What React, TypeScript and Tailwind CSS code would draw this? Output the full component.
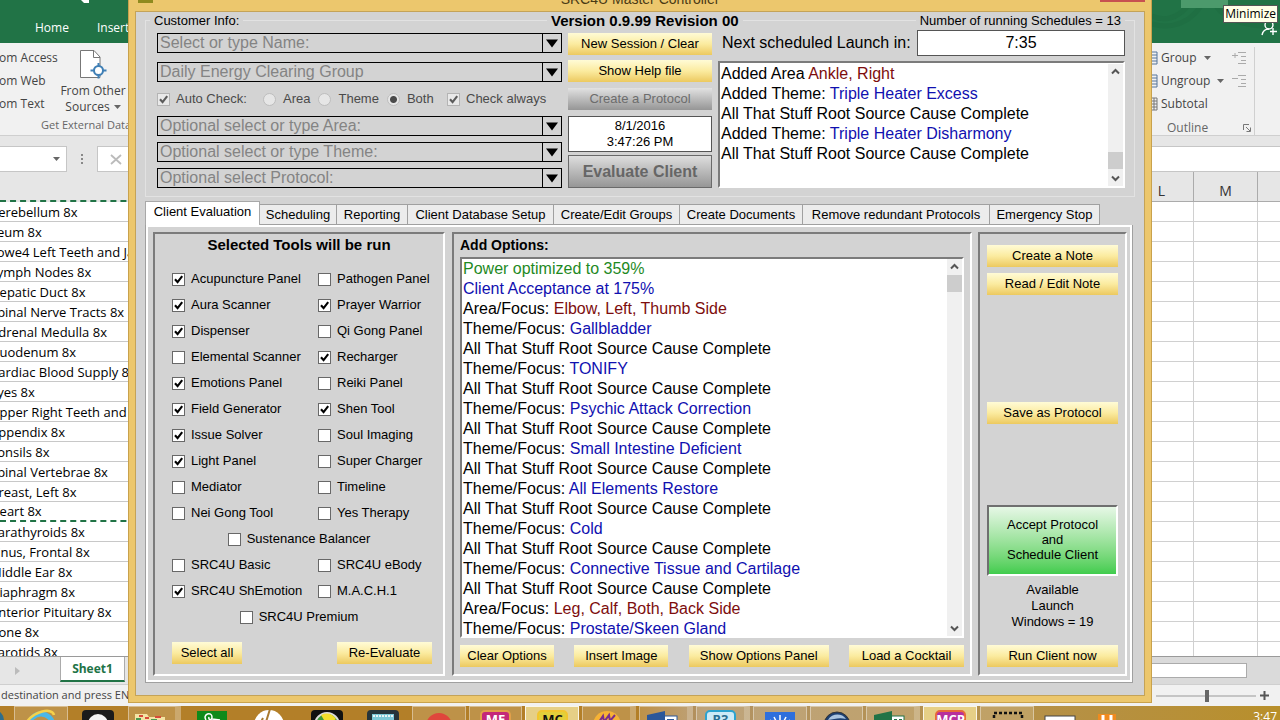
import React from "react";

type Tone = "green" | "blue" | "red" | "black";
type LogLine = { label?: string; value: string; tone: Tone };

const tones: Record<Tone, string> = {
  green: "text-[#1f8a1f]",
  blue: "text-[#1010b0]",
  red: "text-[#7d0d0d]",
  black: "text-black",
};

const complete: LogLine = { value: "All That Stuff Root Source Cause Complete", tone: "black" };
const theme = (value: string): LogLine => ({ label: "Theme/Focus: ", value, tone: "blue" });
const area = (value: string): LogLine => ({ label: "Area/Focus: ", value, tone: "red" });

const scheduleLog: LogLine[] = [
  { label: "Added Area ", value: "Ankle, Right", tone: "red" },
  { label: "Added Theme: ", value: "Triple Heater Excess", tone: "blue" },
  complete,
  { label: "Added Theme: ", value: "Triple Heater Disharmony", tone: "blue" },
  complete,
];

const optionsLog: LogLine[] = [
  { value: "Power optimized to 359%", tone: "green" },
  { value: "Client Acceptance at 175%", tone: "blue" },
  area("Elbow, Left, Thumb Side"),
  theme("Gallbladder"),
  complete,
  theme("TONIFY"),
  complete,
  theme("Psychic Attack Correction"),
  complete,
  theme("Small Intestine Deficient"),
  complete,
  theme("All Elements Restore"),
  complete,
  theme("Cold"),
  complete,
  theme("Connective Tissue and Cartilage"),
  complete,
  area("Leg, Calf, Both, Back Side"),
  theme("Prostate/Skeen Gland"),
];

const tabs = [
  { name: "Scheduling", width: "w-[77px]" },
  { name: "Reporting", width: "w-[71px]" },
  { name: "Client Database Setup", width: "w-[146px]" },
  { name: "Create/Edit Groups", width: "w-[126px]" },
  { name: "Create Documents", width: "w-[123px]" },
  { name: "Remove redundant Protocols", width: "w-[187px]" },
  { name: "Emergency Stop", width: "w-[110px]" },
];

const tools: [string, boolean][] = [
  ["Acupuncture Panel", true],
  ["Pathogen Panel", false],
  ["Aura Scanner", true],
  ["Prayer Warrior", true],
  ["Dispenser", true],
  ["Qi Gong Panel", false],
  ["Elemental Scanner", false],
  ["Recharger", true],
  ["Emotions Panel", true],
  ["Reiki Panel", false],
  ["Field Generator", true],
  ["Shen Tool", true],
  ["Issue Solver", true],
  ["Soul Imaging", false],
  ["Light Panel", true],
  ["Super Charger", false],
  ["Mediator", false],
  ["Timeline", false],
  ["Nei Gong Tool", false],
  ["Yes Therapy", false],
];

const srcTools: [string, boolean][] = [
  ["SRC4U Basic", false],
  ["SRC4U eBody", false],
  ["SRC4U ShEmotion", true],
  ["M.A.C.H.1", false],
];

const cells = [
  "Cerebellum 8x",
  "Ileum 8x",
  "Lowe4 Left Teeth and Jaw 8x",
  "Lymph Nodes 8x",
  "Hepatic Duct 8x",
  "Spinal Nerve Tracts 8x",
  "Adrenal Medulla 8x",
  "Duodenum 8x",
  "Cardiac Blood Supply 8x",
  "Eyes 8x",
  "Upper Right Teeth and Jaw 8x",
  "Appendix 8x",
  "Tonsils 8x",
  "Spinal Vertebrae 8x",
  "Breast, Left 8x",
  "Heart 8x",
  "Parathyroids 8x",
  "Sinus, Frontal 8x",
  "Middle Ear 8x",
  "Diaphragm 8x",
  "Anterior Pituitary 8x",
  "Bone 8x",
  "Parotids 8x",
];

const Check = ({ name, checked, faded }: { name: string; checked: boolean; faded?: boolean }) => (
  <label className={`flex items-center gap-[6px] whitespace-nowrap text-[13px] leading-4 ${faded ? "text-[#4a4a4a]" : "text-black"}`}>
    <span className="relative h-[13px] w-[13px] shrink-0">
      <input
        type="checkbox"
        defaultChecked={checked}
        className={`peer block h-[13px] w-[13px] appearance-none border ${faded ? "border-[#b4b4b4] bg-[#e9e9e9]" : "border-[#686868] bg-white"}`}
      />
      <svg viewBox="0 0 13 13" className="pointer-events-none absolute inset-0 hidden h-[13px] w-[13px] peer-checked:block">
        <path d="M3 6.2 L5.6 9.2 L10.2 3.2" fill="none" stroke={faded ? "#5c5c5c" : "#000"} strokeWidth="2.1" />
      </svg>
    </span>
    <span>{name}</span>
  </label>
);

const Radio = ({ name, checked }: { name: string; checked?: boolean }) => (
  <label className="flex items-center gap-[7px] text-[13px] leading-4 text-[#4a4a4a]">
    <input
      type="radio"
      name="scope"
      defaultChecked={checked}
      className="h-[13px] w-[13px] appearance-none rounded-full border border-[#bdbdbd] bg-[#e6e6e6] checked:bg-[radial-gradient(circle,#4a4a4a_0_3px,#e6e6e6_4px)]"
    />
    {name}
  </label>
);

const Combo = ({ name }: { name: string }) => (
  <div className="relative h-5">
    <select
      aria-label={name}
      className="block h-5 w-full appearance-none border border-black bg-[#d3d3d3] pl-[2px] text-base leading-[18px] text-[#848484]"
    >
      <option>{name}</option>
    </select>
    <span className="pointer-events-none absolute inset-y-0 right-0 flex w-5 items-center justify-center border border-black">
      <svg width="14" height="9" viewBox="0 0 14 9" className="mt-px">
        <path d="M1 0.5 H13 L7 8.5 Z" fill="#000" />
      </svg>
    </span>
  </div>
);

const GoldButton = ({ children, className = "" }: { children: React.ReactNode; className?: string }) => (
  <button
    className={`h-[22px] whitespace-nowrap bg-gradient-to-b from-[#fffbd6] via-[#fbeb9f] to-[#ecc95e] text-[13px] leading-5 text-black ${className}`}
  >
    {children}
  </button>
);

const Chevron = ({ up }: { up?: boolean }) => (
  <svg width="9" height="7" viewBox="0 0 9 7" className={up ? "" : "rotate-180"}>
    <path d="M1 5.5 L4.5 2 L8 5.5" fill="none" stroke="#555" strokeWidth="2" />
  </svg>
);

const LogBox = ({ lines, label, className, thumbAtEnd }: { lines: LogLine[]; label: string; className: string; thumbAtEnd?: boolean }) => (
  <div
    role="log"
    aria-label={label}
    className={`flex overflow-hidden border-2 border-b-white border-l-[#7b7b7b] border-r-white border-t-[#7b7b7b] bg-white ${className}`}
  >
    <div className="flex-1 overflow-hidden whitespace-pre pl-px text-base leading-5">
      {lines.map((line, index) => (
        <p key={index}>
          {line.label}
          <span className={tones[line.tone]}>{line.value}</span>
        </p>
      ))}
    </div>
    <div className="flex w-[15px] shrink-0 flex-col items-center bg-[#f0f0f0] py-1">
      <Chevron up />
      {thumbAtEnd && <div className="flex-1"></div>}
      <div className={`h-[17px] w-[15px] bg-[#cdcdcd] ${thumbAtEnd ? "mb-[6px]" : "mt-[5px]"}`}></div>
      {!thumbAtEnd && <div className="flex-1"></div>}
      <Chevron />
    </div>
  </div>
);

const Caret = () => (
  <svg width="7" height="4" viewBox="0 0 7 4">
    <path d="M0 0 H7 L3.5 4 Z" fill="#666" />
  </svg>
);

const panel = "border-2 border-l-[#7b7b7b] border-t-[#7b7b7b] border-r-white border-b-white";

/* Spreadsheet */

const ribbonRows = [
  { name: "Group", caret: true, kind: "list" },
  { name: "Ungroup", caret: true, kind: "list" },
  { name: "Subtotal", caret: false, kind: "grid" },
];

const Spreadsheet = () => (
  <div className="flex h-full flex-col overflow-hidden bg-[#e6e6e6] font-['Open_Sans',sans-serif] text-xs text-[#444]">
    <header className="flex h-[43px] shrink-0 justify-between overflow-hidden bg-[#217346] text-white">
      <div className="relative flex gap-7 pl-[35px] pt-5 leading-4">
        <a href="#home">Home</a>
        <a href="#insert">Insert</a>
        <svg width="12" height="4" viewBox="0 0 12 4" className="absolute left-20 top-0">
          <path d="M1 0 H9 V3 H4 Z" fill="#fff" />
        </svg>
      </div>
      <div className="relative w-32">
        <svg width="128" height="43" viewBox="0 0 128 43">
          <path d="M0 16 C14 22 28 18 40 0 M0 24 C20 30 42 22 52 0 M60 0 C70 20 92 28 128 26" fill="none" stroke="#1f6f43" strokeWidth="5" />
          <rect x="29" y="0" width="47" height="8" fill="#4c9a6c" />
          <circle cx="117" cy="25" r="4" fill="none" stroke="#fff" strokeWidth="1.4" />
          <path d="M110 35 C111 30 114 29 117 29 M121 28 V35 M118 31.5 H125" fill="none" stroke="#fff" strokeWidth="1.4" />
        </svg>
        <span className="absolute right-[2px] top-[5px] border border-[#555] bg-[#ffffe8] px-px text-xs leading-4 text-black">Minimize</span>
      </div>
    </header>

    <div className="flex h-[93px] shrink-0 justify-between border-b border-[#cfcfcf] bg-[#f1f1f1]">
      <div className="flex w-[134px] flex-col whitespace-nowrap">
        <div className="flex pt-[6px]">
          <div className="-ml-3 flex w-[70px] flex-col gap-[7px] pt-px leading-4">
            <span>From Access</span>
            <span>From Web</span>
            <span>From Text</span>
          </div>
          <button className="flex w-[70px] flex-col items-center leading-4">
            <svg width="28" height="30" viewBox="0 0 28 30" className="mb-1">
              <path d="M1.5 1.5 H15 L21 8 V28.5 H1.5 Z" fill="#fff" stroke="#777" />
              <path d="M14.5 1.5 V8.5 H21" fill="none" stroke="#777" />
              <circle cx="19.5" cy="21.5" r="4.5" fill="#fff" stroke="#3f7fb5" strokeWidth="2" />
              <path d="M19.5 14 V17 M19.5 26 V29.5 M11.5 21.5 H15 M24 21.5 H27.5" stroke="#3f7fb5" strokeWidth="2" />
            </svg>
            <span>From Other</span>
            <span className="flex items-center gap-1">
              Sources <Caret />
            </span>
          </button>
        </div>
        <span className="pl-[41px] pt-[2px] text-[11px] leading-4 text-[#666]">Get External Data</span>
      </div>
      <div className="w-32">
        <div className="my-1 mr-[25px] flex flex-col border-r border-[#d0d0d0] pt-[3px]">
          <div className="flex h-[70px] flex-col gap-[7px]">
            {ribbonRows.map((row) => (
              <div key={row.name} className="flex h-4 items-center gap-[3px] leading-4">
                <svg width="6" height="14" viewBox="0 0 6 14">
                  <path d="M0 1 H5 V13 H0 M0 4 H5 M0 7 H5 M0 10 H5" fill="none" stroke={row.kind === "list" ? "#55749a" : "#777"} />
                  {row.kind === "grid" && <path d="M2 1 V13" stroke="#777" />}
                </svg>
                <span>{row.name}</span>
                {row.caret && (
                  <span className="pl-1">
                    <Caret />
                  </span>
                )}
                {row.caret && (
                  <svg width="15" height="14" viewBox="0 0 15 14" className="ml-auto mr-[7px]">
                    <path d="M6 1.5 H14 M9 5.5 H14 M9 9.5 H14 M6 12.5 H14 M0 4.5 H6" fill="none" stroke="#aaa" />
                    {row.name === "Group" && <path d="M3 2 V7" stroke="#aaa" />}
                  </svg>
                )}
              </div>
            ))}
          </div>
          <div className="flex items-center justify-between pr-[3px] leading-4 text-[#666]">
            <span className="pl-[15px]">Outline</span>
            <svg width="8" height="8" viewBox="0 0 8 8">
              <path d="M0.5 6 V0.5 H6 M3 3 L7 7 M7.5 3.5 V7.5 H3.5" fill="none" stroke="#777" />
            </svg>
          </div>
        </div>
      </div>
    </div>

    <div className="flex h-9 shrink-0 justify-between pt-[10px]">
      <div className="flex">
        <div className="flex h-[26px] w-[67px] items-center justify-end border border-l-0 border-[#c6c6c6] bg-white pr-[6px]">
          <Caret />
        </div>
        <svg width="30" height="26" viewBox="0 0 30 26">
          <path d="M15 8 V10 M15 12 V14 M15 16 V18" stroke="#888" strokeWidth="2" />
        </svg>
        <div className="flex h-[26px] w-[60px] items-center border border-[#c6c6c6] bg-white pl-3">
          <svg width="12" height="11" viewBox="0 0 12 11">
            <path d="M1 1 L11 10 M11 1 L1 10" stroke="#bbb" strokeWidth="1.8" />
          </svg>
        </div>
      </div>
      <div className="h-[26px] w-40 border-y border-[#c6c6c6] bg-white"></div>
    </div>

    <div className="flex-1 overflow-hidden">
      <table className="w-full table-fixed border-separate border-spacing-0 bg-white font-['Open_Sans',sans-serif] text-[13px] text-black">
        <colgroup>
          <col />
          <col className="w-16" />
          <col className="w-16" />
          <col className="w-[22px]" />
        </colgroup>
        <thead>
          <tr className="h-[30px] bg-[#e6e6e6] text-sm text-[#333]">
            <th className="border-b-2 border-dashed border-[#217346] p-0"></th>
            <th className="border-b border-r border-[#ababab] p-0 pt-2 font-normal leading-5">L</th>
            <th className="border-b border-r border-[#ababab] p-0 pt-2 font-normal leading-5">M</th>
            <th className="border-b border-[#ababab] p-0"></th>
          </tr>
        </thead>
        <tbody>
          {cells.map((cell) => (
            <tr key={cell} className="h-5">
              <td
                className={`border-b p-0 leading-[18px] ${cell === "Heart 8x" ? "border-b-2 border-dashed border-[#217346]" : "border-[#c8c8c8]"}`}
              >
                <div className="-ml-[10px] h-[18px] whitespace-nowrap">{cell}</div>
              </td>
              <td className="border-b border-r border-[#d0d0d0] p-0"></td>
              <td className="border-b border-r border-[#d0d0d0] p-0"></td>
              <td className="border-b border-[#d0d0d0] p-0"></td>
            </tr>
          ))}
        </tbody>
      </table>
    </div>

    <div className="flex h-7 shrink-0 justify-between border-t border-[#9a9a9a]">
      <div className="flex">
        <div className="flex w-[60px] items-center pl-[15px]">
          <svg width="5" height="8" viewBox="0 0 5 8">
            <path d="M0 0 L5 4 L0 8 Z" fill="#bbb" />
          </svg>
        </div>
        <button className="h-[25px] w-[65px] border-x border-b-2 border-x-[#ababab] border-b-[#217346] bg-white text-xs font-bold text-[#217346]">
          Sheet1
        </button>
      </div>
      <div className="flex w-40 items-center bg-[#dadada]">
        <div className="h-[15px] w-[127px] border border-[#ababab] bg-white"></div>
      </div>
    </div>
    <footer className="flex h-[22px] shrink-0 items-center justify-between border-t border-[#cfcfcf] bg-[#f1f1f1]">
      <span className="pl-px text-[11px]">destination and press ENTER or choose Paste</span>
      <div className="flex items-center gap-1 pr-[11px]">
        <svg width="112" height="12" viewBox="0 0 112 12">
          <path d="M12 6 H112" stroke="#999" />
          <rect x="61" y="0" width="4" height="12" fill="#666" />
        </svg>
        <svg width="9" height="9" viewBox="0 0 9 9">
          <path d="M0 4.5 H9 M4.5 0 V9" stroke="#555" strokeWidth="2" />
        </svg>
      </div>
    </footer>
  </div>
);

/* Taskbar */

const AppBadge = ({ text, fill, edge, color }: { text: string; fill: string; edge: string; color: string }) => (
  <>
    <rect x="14" y="4" width="29" height="20" rx="4" fill={fill} stroke={edge} strokeWidth="2" />
    <text x="28.5" y="17" textAnchor="middle" fontSize="13" fontWeight="bold" fontFamily="Open Sans" fill={color}>
      {text}
    </text>
  </>
);

const taskIcons: { title: string; look: "plain" | "open" | "stack" | "active"; art: React.ReactNode }[] = [
  {
    title: "Browser",
    look: "open",
    art: (
      <>
        <circle cx="29" cy="19" r="12" fill="none" stroke="#4bb8e8" strokeWidth="5" />
        <path d="M14 16 C22 4 40 0 42 8" fill="none" stroke="#f6d24a" strokeWidth="2.5" />
      </>
    ),
  },
  {
    title: "Camera",
    look: "plain",
    art: (
      <>
        <rect x="13" y="4" width="32" height="24" rx="4" fill="#1b1b1b" />
        <circle cx="29" cy="18" r="10" fill="#f4f4f4" />
      </>
    ),
  },
  {
    title: "Files",
    look: "stack",
    art: (
      <>
        <path d="M11 7 H23 L25 10 H41 V20 H11 Z" fill="#f3e3a4" />
        <path d="M15 9 H19 M21 11 H25 M31 10 H37" stroke="#d84a3a" strokeWidth="2" />
        <path d="M12 12 H17 M27 13 H33" stroke="#4a9a50" strokeWidth="2" />
      </>
    ),
  },
  {
    title: "Notes",
    look: "plain",
    art: (
      <>
        <rect x="14" y="5" width="30" height="20" fill="#0e8a1a" />
        <path d="M23 14 C19 8 29 5 29 11 C29 15 25 14 26 11 M29 13 L37 14" fill="none" stroke="#fff" strokeWidth="1.5" />
      </>
    ),
  },
  {
    title: "Support",
    look: "plain",
    art: (
      <>
        <circle cx="29" cy="19" r="15" fill="#fff" />
        <path d="M30 3 L26 16 M23 12 L21 16" stroke="#a97a30" strokeWidth="2" />
      </>
    ),
  },
  {
    title: "Gauge",
    look: "plain",
    art: (
      <>
        <rect x="14" y="4" width="32" height="24" rx="4" fill="#111" />
        <circle cx="30" cy="19" r="12" fill="#3f9a3a" stroke="#ddd" strokeWidth="2" />
        <path d="M30 19 L24 9 C30 6 36 8 39 13 Z" fill="#f2df2d" />
      </>
    ),
  },
  {
    title: "Player",
    look: "plain",
    art: (
      <>
        <rect x="14" y="4" width="32" height="24" rx="4" fill="#26343a" />
        <rect x="19" y="8" width="22" height="12" fill="#7ec9d8" />
        <path d="M20 10 H40" stroke="#e8f4f6" strokeWidth="2" strokeDasharray="2 1" />
      </>
    ),
  },
  {
    title: "Chat",
    look: "open",
    art: (
      <>
        <circle cx="29" cy="19" r="13" fill="#e0463c" />
        <path d="M24 14 H34" stroke="#f3a59f" strokeWidth="2" />
      </>
    ),
  },
  { title: "ME", look: "open", art: <AppBadge text="ME" fill="#c4287a" edge="#e2a04a" color="#fff" /> },
  { title: "MC", look: "active", art: <AppBadge text="MC" fill="#e3cf3a" edge="#f2c52e" color="#111" /> },
  {
    title: "Waves",
    look: "stack",
    art: (
      <>
        <circle cx="29" cy="18" r="14" fill="#f6b235" />
        <path d="M21 15 L25 9 L26 15 L31 8 L32 14 L37 8" fill="none" stroke="#7a2d8c" strokeWidth="2" />
      </>
    ),
  },
  {
    title: "Word",
    look: "stack",
    art: (
      <>
        <rect x="26" y="9" width="16" height="14" fill="#fff" stroke="#2b579a" />
        <path d="M12 8 L30 4 V24 H12 Z" fill="#2b579a" />
        <path d="M32 13 H39" stroke="#2b579a" strokeWidth="2" />
      </>
    ),
  },
  { title: "R3", look: "stack", art: <AppBadge text="R3" fill="#cdeaf6" edge="#2ba3cf" color="#2b6f92" /> },
  {
    title: "Weather",
    look: "open",
    art: (
      <>
        <rect x="14" y="5" width="30" height="20" fill="#2f6fdc" />
        <path d="M29 8 V13 M23 10 L25 14 M35 10 L33 14 M19 13 L22 16 M39 13 L36 16" stroke="#fff" strokeWidth="1.5" />
      </>
    ),
  },
  {
    title: "Globe",
    look: "open",
    art: (
      <>
        <circle cx="29" cy="18" r="13" fill="#1d3f70" stroke="#333" />
        <path d="M20 13 C24 6 34 6 38 12 C32 10 26 12 20 13 Z" fill="#a9c3df" />
      </>
    ),
  },
  {
    title: "Excel",
    look: "stack",
    art: (
      <>
        <rect x="26" y="9" width="16" height="14" fill="#fff" stroke="#217346" />
        <path d="M12 8 L30 4 V24 H12 Z" fill="#217346" />
        <path d="M32 13 H35 M37 13 H40" stroke="#217346" strokeWidth="2" />
      </>
    ),
  },
  { title: "MCP", look: "active", art: <AppBadge text="MCP" fill="#b7309d" edge="#e86a3a" color="#fff" /> },
  {
    title: "Snip",
    look: "open",
    art: <path d="M15 16 V6 H43 V16" fill="none" stroke="#111" strokeWidth="2.5" strokeDasharray="3 2" />,
  },
];

const looks = {
  plain: "",
  open: "border border-b-0 border-white/40 bg-white/15",
  stack: "border border-b-0 border-r-[6px] border-white/40 border-r-white/20 bg-white/15",
  active: "border border-b-0 border-white/80 bg-[#e6cf86]",
};

const Taskbar = () => (
  <nav className="flex h-[14px] shrink-0 justify-between overflow-hidden bg-gradient-to-r from-[#b37f28] from-50% via-[#b29364] via-55% to-[#b88f2a]">
    <svg width="14" height="14" viewBox="0 0 14 14">
      <circle cx="-6" cy="14" r="10" fill="#2e6e8c" />
    </svg>
    <div className="grid w-[1020px] shrink-0 grid-cols-18 gap-x-[3px]">
      {taskIcons.map((icon) => (
        <button key={icon.title} title={icon.title} className={`flex h-[14px] justify-center overflow-hidden ${looks[icon.look]}`}>
          <svg width="57" height="14" viewBox="0 0 57 14" className="shrink-0">
            {icon.art}
          </svg>
        </button>
      ))}
    </div>
    <svg width="100" height="14" viewBox="0 0 100 14">
      <rect x="11" y="10" width="30" height="6" fill="#fff" stroke="#444" />
      <rect x="64" y="8" width="18" height="8" fill="#f08a1e" />
      <path d="M69 9 V14 M77 9 V14" stroke="#fff" strokeWidth="3" />
    </svg>
    <time className="flex-1 pr-[3px] pt-[3px] text-right font-['Open_Sans',sans-serif] text-xs leading-4 text-white">3:47</time>
  </nav>
);

/* Master Controller window */

const CustomerInfo = () => (
  <section className="relative mx-[9px] mt-2 border border-[#e2e2e2] pb-2">
    <div className="absolute inset-x-0 -top-2 flex justify-between pl-1 pr-[9px] text-[13px] leading-4">
      <h2 className="bg-[#d3d3d3] px-1">Customer Info:</h2>
      <span className="bg-[#d3d3d3] px-1">Number of running Schedules = 13</span>
    </div>
    <h1 className="absolute -top-2 left-[401px] bg-[#d3d3d3] px-1 text-[15px] font-bold leading-4">Version 0.9.99 Revision 00</h1>
    <div className="flex gap-[6px] pl-[11px] pr-[9px] pt-3">
      <div className="w-[405px]">
        <Combo name="Select or type Name:" />
        <div className="mt-[9px]">
          <Combo name="Daily Energy Clearing Group" />
        </div>
        <div className="flex h-[34px] items-center">
          <div className="w-[106px]">
            <Check name="Auto Check:" checked faded />
          </div>
          <div className="flex w-[184px] gap-2">
            <Radio name="Area" />
            <Radio name="Theme" />
            <Radio name="Both" checked />
          </div>
          <Check name="Check always" checked faded />
        </div>
        <div className="flex flex-col gap-[6px]">
          <Combo name="Optional select or type Area:" />
          <Combo name="Optional select or type Theme:" />
          <Combo name="Optional select Protocol:" />
        </div>
      </div>

      <div className="flex w-36 flex-col">
        <GoldButton>New Session / Clear</GoldButton>
        <GoldButton className="mt-[5px]">Show Help file</GoldButton>
        <button className="mt-[6px] h-[22px] bg-gradient-to-b from-[#e2e2e2] to-[#969696] text-[13px] leading-5 text-[#6c6c6c]">
          Create a Protocol
        </button>
        <div className="mt-[6px] flex h-9 flex-col justify-center border border-[#555] bg-white text-center text-[13px] leading-4">
          <time>8/1/2016</time>
          <time>3:47:26 PM</time>
        </div>
        <button className="mt-[3px] h-[33px] border border-[#6a6a6a] bg-gradient-to-b from-[#dedede] to-[#969696] text-base font-bold text-[#666]">
          Evaluate Client
        </button>
      </div>

      <div className="-mt-[3px] min-w-0 flex-1">
        <div className="flex items-center justify-between pl-1">
          <label htmlFor="launch" className="whitespace-nowrap text-base">
            Next scheduled Launch in:
          </label>
          <input id="launch" readOnly value="7:35" className="h-[26px] w-52 border border-[#555] bg-white text-center text-base" />
        </div>
        <LogBox label="Schedule log" lines={scheduleLog} thumbAtEnd className="mt-[5px] h-[127px] pt-px" />
      </div>
    </div>
  </section>
);

const ControllerWindow = () => (
  <main className="absolute inset-x-32 top-0 border-x border-b border-[#c9a24c] bg-[#ecc76d] px-[6px] pb-[6px] font-['Liberation_Sans',Arial,sans-serif] text-black">
    <div className="relative flex h-[11px] items-end justify-center overflow-hidden">
      <span className="mb-1 text-sm leading-4 text-[#4a3a14]">SRC4U Master Controller</span>
      <span className="absolute left-[3px] top-0 h-[3px] w-[15px] bg-[#8f8a1e]"></span>
      <button aria-label="Close" className="absolute right-0 top-0 h-[2px] w-[45px] bg-[#c75050]"></button>
    </div>
    <div className="border border-[#c4a358] bg-[#d3d3d3] pb-3">
      <CustomerInfo />

      <div className="ml-[9px] mr-[11px] mt-1">
        <div role="tablist" className="flex items-end whitespace-nowrap text-[13px]">
          <button role="tab" aria-selected="true" className="h-6 w-[115px] border border-b-0 border-[#a8a8a8] bg-white pb-1 leading-4">
            Client Evaluation
          </button>
          {tabs.map((tab) => (
            <button key={tab.name} role="tab" className={`h-[21px] border border-l-0 border-[#a0a0a0] bg-[#ececec] leading-4 ${tab.width}`}>
              {tab.name}
            </button>
          ))}
        </div>
        <div className="border border-t-0 border-[#a0a0a0]">
          <div className="flex border-2 border-white pb-1 pl-[5px] pr-[3px] pt-[5px]">
            <section className={`h-[444px] w-[292px] ${panel}`}>
              <h2 className="pt-[3px] text-center text-[15px] font-bold leading-4">Selected Tools will be run</h2>
              <div className="grid grid-cols-[146px_1fr] pl-[17px] pt-[13px]">
                {tools.map(([name, checked]) => (
                  <div key={name} className="flex h-[26px] items-center">
                    <Check name={name} checked={checked} />
                  </div>
                ))}
              </div>
              <div className="flex h-[26px] items-center justify-center">
                <Check name="Sustenance Balancer" checked={false} />
              </div>
              <div className="grid grid-cols-[146px_1fr] pl-[17px]">
                {srcTools.map(([name, checked]) => (
                  <div key={name} className="flex h-[26px] items-center">
                    <Check name={name} checked={checked} />
                  </div>
                ))}
              </div>
              <div className="flex h-[26px] items-center justify-center">
                <Check name="SRC4U Premium" checked={false} />
              </div>
              <div className="flex justify-between pl-[17px] pr-[11px] pt-3">
                <GoldButton className="w-[70px]">Select all</GoldButton>
                <GoldButton className="w-[95px]">Re-Evaluate</GoldButton>
              </div>
            </section>

            <section className={`ml-[7px] h-[444px] flex-1 px-[6px] ${panel}`}>
              <h2 className="pt-[3px] text-sm font-bold leading-4">Add Options:</h2>
              <LogBox label="Options log" lines={optionsLog} className="mt-1 h-[381px]" />
              <div className="flex justify-between pt-[7px]">
                <GoldButton className="w-[94px]">Clear Options</GoldButton>
                <GoldButton className="w-[94px]">Insert Image</GoldButton>
                <GoldButton className="w-[140px]">Show Options Panel</GoldButton>
                <GoldButton className="w-[115px]">Load a Cocktail</GoldButton>
              </div>
            </section>

            <section className={`ml-[6px] flex h-[444px] w-[149px] flex-col px-[7px] pb-[7px] pt-[11px] ${panel}`}>
              <GoldButton>Create a Note</GoldButton>
              <GoldButton className="mt-[6px]">Read / Edit Note</GoldButton>
              <GoldButton className="mt-[107px]">Save as Protocol</GoldButton>
              <button className="mt-[81px] h-[71px] border-2 border-b-white border-l-[#6f6f6f] border-r-white border-t-[#6f6f6f] bg-gradient-to-b from-[#e6f7e6] to-[#3fcc4d] pb-[2px] text-[13px] leading-[15px]">
                Accept Protocol
                <br />
                and
                <br />
                Schedule Client
              </button>
              <p className="flex-1 pt-[6px] text-center text-[13px] leading-4">
                Available
                <br />
                Launch
                <br />
                Windows = 19
              </p>
              <GoldButton>Run Client now</GoldButton>
            </section>
          </div>
        </div>
      </div>
    </div>
  </main>
);

export default function App() {
  return (
    <div className="relative flex h-screen flex-col overflow-hidden">
      <div className="min-h-0 flex-1">
        <Spreadsheet />
      </div>
      <Taskbar />
      <ControllerWindow />
    </div>
  );
}
